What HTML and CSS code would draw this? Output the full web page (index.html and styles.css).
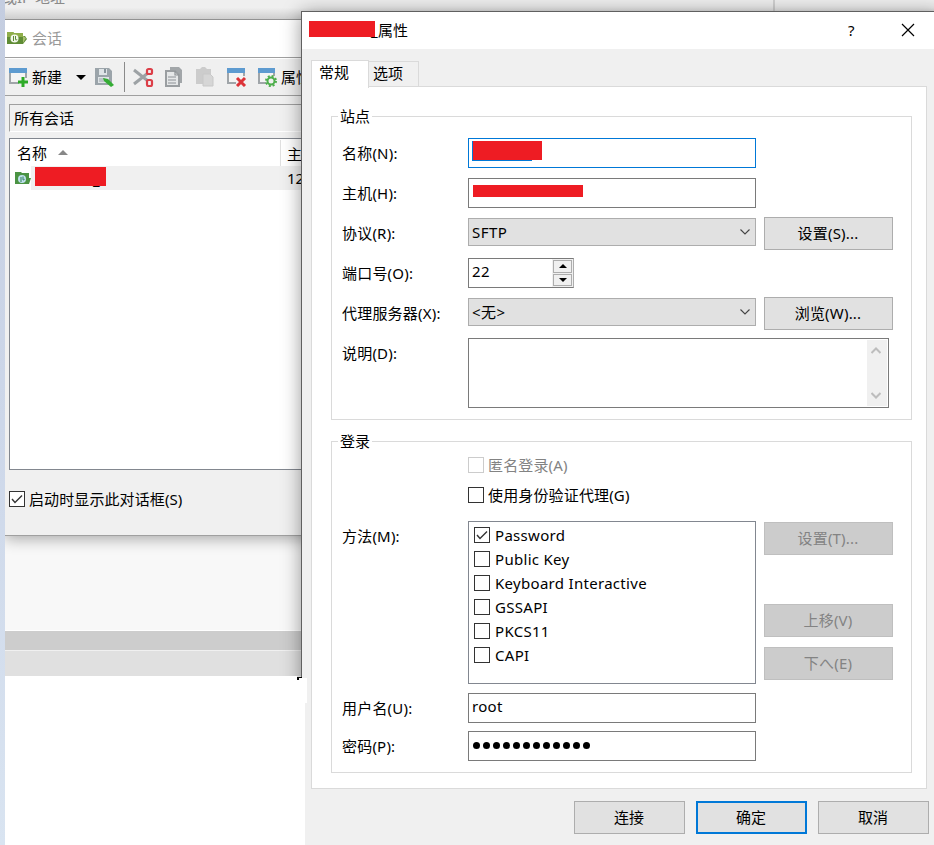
FILE: index.html
```html
<!DOCTYPE html>
<html lang="zh-CN">
<head>
<meta charset="utf-8">
<title>会话属性</title>
<link rel="stylesheet" href="styles.css">
</head>
<body>
<div class="desktop">
  <div class="strip"></div>
  <main class="backdrop">
    <div class="host-bar"><span class="host-text">或IP 地址</span><i class="host-divider"></i></div>
    <div class="host-body"></div>
    <div class="host-band"></div>
    <div class="host-status"></div>
  </main>

  <section class="window sessions">
    <header class="sessions-title">
      <svg width="20" height="14" viewBox="0 0 20 14"><path d="M0 1h6l1 1h9v3h2l2 3-4 5H0z" fill="#5f8c35"/><path d="M0 1h6l1 1h9v4H0z" fill="#8fae4a"/><path d="M16 5l3 2-3 5z" fill="#a8c070"/><circle cx="7.500" cy="7.500" r="4" fill="#f2f7ea"/><path d="M6.500 5v5M8.500 5v3.500c0 1 1.400.8 1.400-.3" stroke="#5e8b35" fill="none"/></svg>
      <span>会话</span>
    </header>
    <div class="toolbar">
      <svg class="t-new" width="20" height="20" viewBox="0 0 20 20"><path d="M1 3v13h9M17 5v6" fill="none" stroke="#a0a5a9" stroke-width="2"/><path d="M2 5h14v10H2z" fill="#f4f4f4"/><path d="M0 1h18v5H0z" fill="#5e9bd0"/><path d="M9 15h10M14 10v10" stroke="#2dab27" stroke-width="3"/></svg>
      <span class="t-text">新建</span>
      <i class="caret"></i>
      <svg class="t-save" width="20" height="20" viewBox="0 0 20 20"><path d="M0 1h14l3 3v14H0z" fill="#9ba4aa"/><path d="M4 2h8v6H4zM3 10h11v6H3z" fill="#dfe4e7"/><path d="M9 2h2v4H9z" fill="#87939b"/><path d="M4 12h6M4 14h6" stroke="#9ba4aa"/><path d="M8 11l5 1 6 6-3 2-7-6z" fill="#35ad35"/></svg>
      <i class="sep"></i>
      <svg class="t-cut" width="21" height="20" viewBox="0 0 21 20"><path d="M1 3l14 11M1 17L15 6" stroke="#9da2a5" stroke-width="3"/><rect x="14" y="2" width="5" height="5" rx="1.500" fill="none" stroke="#dc3f48" stroke-width="2.200"/><rect x="14" y="13" width="5" height="6" rx="1.500" fill="none" stroke="#dc3f48" stroke-width="2.200"/></svg>
      <svg class="t-copy" width="19" height="20" viewBox="0 0 19 20"><path d="M5 0h9l3 3v13H5z" fill="#a2a6a9"/><path d="M1 4h9l4 4v11H1z" fill="#e5e7e8" stroke="#9a9ea1" stroke-width="2"/><path d="M3 10h8M3 13h8M3 16h8M10 4v4h4" stroke="#8d9295" stroke-width="1.200" fill="none"/></svg>
      <svg class="t-paste" width="19" height="20" viewBox="0 0 19 20"><path d="M0 2h4l2-2h3l2 2h4v15H0z" fill="#ccc"/><path d="M7 7h7l3 3v9H7z" fill="#d6d6d6" stroke="#c8c8c8"/></svg>
      <svg class="t-del" width="20" height="20" viewBox="0 0 20 20"><path d="M1 3v13h8M17 5v4" fill="none" stroke="#a0a5a9" stroke-width="2"/><path d="M2 5h14v10H2z" fill="#f4f4f4"/><path d="M0 1h18v5H0z" fill="#5e9bd0"/><path d="M10 11l8 8M18 11l-8 8" stroke="#dc3338" stroke-width="3"/></svg>
      <svg class="t-prop" width="20" height="20" viewBox="0 0 20 20"><path d="M1 3v13h7M16 5v4" fill="none" stroke="#a0a5a9" stroke-width="2"/><path d="M2 5h13v10H2z" fill="#f4f4f4"/><path d="M0 1h17v5H0z" fill="#5e9bd0"/><circle cx="13" cy="14" r="5" fill="none" stroke="#4dae4b" stroke-width="2" stroke-dasharray="2 1.930"/><circle cx="13" cy="14" r="3.500" fill="#f0f0f0" stroke="#4dae4b" stroke-width="2"/></svg>
      <span class="t-text">属性</span>
    </div>
    <div class="path">所有会话</div>
    <div class="list">
      <div class="list-head"><span class="col-name">名称</span><i class="sort"></i><span class="col-host">主机</span></div>
      <div class="list-row">
        <svg width="16" height="13" viewBox="0 0 16 13"><path d="M0 0h6l1 1h7v5h2l-2 6H0z" fill="#4b9343"/><circle cx="7" cy="7" r="4" fill="#bfe0ee"/><path d="M6 5v5M8 4.500v3c0 1 1.300.6 1.300-.6" stroke="#2f7e55" fill="none"/></svg>
        <div class="row-body"><i class="mask"></i><span class="row-tail">_</span><span class="row-host">127</span></div>
      </div>
    </div>
    <div class="startup"><i class="box checked"><svg viewBox="0 0 14 14"><path d="M2 7l3 3.500L12 3.500"/></svg></i><span>启动时显示此对话框(S)</span></div>
  </section>

  <section class="window dialog">
    <header class="dialog-title">
      <i class="mask"></i><span class="title-tail">_</span><span class="title-text">属性</span>
      <span class="help">?</span>
      <svg class="close" width="14" height="14" viewBox="0 0 14 14"><path d="M1 1l12 12M13 1L1 13" stroke="#000" stroke-width="1.200"/></svg>
    </header>
    <nav class="tabs"><span class="tab active">常规</span><span class="tab">选项</span></nav>
    <div class="panel">
      <div class="group site">
        <div class="legend">站点</div>
        <div class="row"><label>名称(N):</label><div class="input focus"><i class="selection"></i><i class="mask"></i></div></div>
        <div class="row"><label>主机(H):</label><div class="input"><i class="mask"></i></div></div>
        <div class="row"><label>协议(R):</label><div class="combo"><span>SFTP</span><svg width="10" height="6" viewBox="0 0 10 6"><path d="M.5.5L5 5 9.500.5"/></svg></div><div class="button">设置(S)...</div></div>
        <div class="row"><label>端口号(O):</label><div class="input spin"><span>22</span><div class="spinner"><i class="up"></i><i class="down"></i></div></div></div>
        <div class="row"><label>代理服务器(X):</label><div class="combo"><span>&lt;无&gt;</span><svg width="10" height="6" viewBox="0 0 10 6"><path d="M.5.5L5 5 9.500.5"/></svg></div><div class="button">浏览(W)...</div></div>
        <div class="row tall"><label>说明(D):</label><div class="textarea"><div class="scroll"><svg width="10" height="7" viewBox="0 0 10 7"><path d="M.5 6L5 1.500 9.500 6"/></svg><svg width="10" height="7" viewBox="0 0 10 7"><path d="M.5 1L5 5.500 9.500 1"/></svg></div></div></div>
      </div>
      <div class="group login">
        <div class="legend">登录</div>
        <div class="check disabled"><i class="box"></i><span>匿名登录(A)</span></div>
        <div class="check"><i class="box"></i><span>使用身份验证代理(G)</span></div>
        <div class="row methods"><label>方法(M):</label>
          <div class="method-list">
            <div><i class="box checked"><svg viewBox="0 0 14 14"><path d="M2 7l3 3.500L12 3.500"/></svg></i><span>Password</span></div>
            <div><i class="box"></i><span>Public Key</span></div>
            <div><i class="box"></i><span>Keyboard Interactive</span></div>
            <div><i class="box"></i><span>GSSAPI</span></div>
            <div><i class="box"></i><span>PKCS11</span></div>
            <div><i class="box"></i><span>CAPI</span></div>
          </div>
          <div class="side"><div class="button off">设置(T)...</div><div class="button off up-btn">上移(V)</div><div class="button off">下へ(E)</div></div>
        </div>
        <div class="row user"><label>用户名(U):</label><div class="input"><span>root</span></div></div>
        <div class="row"><label>密码(P):</label><div class="input dots"><i></i><i></i><i></i><i></i><i></i><i></i><i></i><i></i><i></i><i></i><i></i><i></i></div></div>
      </div>
    </div>
    <footer class="actions"><div class="button">连接</div><div class="button primary">确定</div><div class="button">取消</div></footer>
  </section>
  <div class="blank blank-upper"></div>
  <div class="blank blank-lower"></div>
  <i class="corner"></i>
</div>
</body>
</html>
```
FILE: styles.css
```css
* { box-sizing: border-box; }
body { margin: 0; }
i { display: block; flex: none; font-style: normal; }
svg { display: block; flex: none; }
.desktop {
  position: relative; display: flex; width: 934px; height: 845px; overflow: hidden;
  background: #fff; color: #000; white-space: nowrap;
  font: 15px/20px "Noto Sans", "Noto Sans CJK SC", sans-serif;
}
.strip { position: relative; z-index: 1; width: 5px; background: linear-gradient(#c4cde0, #cdd7e9 50%, #d9e4f1); }
.backdrop { flex: 1; }
.host-bar { display: flex; height: 19px; background: linear-gradient(#efefef 40%, #cecece); overflow: hidden; }
.host-text { width: 771px; margin-top: -13px; margin-left: -3px; color: #8a8a8a; flex: none; }
.host-divider { width: 2px; background: #d0d0d0; }
.host-body { height: 612px; background: #f8f8f8; border-bottom: 1px solid #fff; }
.host-band { height: 20px; background: #cdcdcd; border-bottom: 1px solid #f0f0f0; }
.host-status { height: 25px; background: #e0e0e0; }
.window { position: absolute; }
.mask { background: #ee1c23; }

.sessions { left: 5px; top: 19px; width: 500px; height: 517px; background: #f0f0f0; border-top: 1px solid #929292; border-bottom: 1px solid #a0a0a0; box-shadow: 0 3px 14px rgba(0,0,0,.32); clip-path: inset(0 0 -20px 0); }
.sessions-title { display: flex; align-items: center; gap: 5px; height: 38px; padding: 0 0 2px 2px; background: #fff; border-bottom: 1px solid #a0a0a0; color: #999; }
.toolbar { display: flex; align-items: center; height: 38px; border-top: 1px solid #fff; border-bottom: 1px solid #a0a0a0; padding-left: 4px; }
.t-text { margin-left: 3px; }
.caret { border: 5px solid transparent; border-top-color: #000; border-bottom: 0; margin: 1px 0 0 14px; }
.t-save { margin-left: 9px; }
.sep { width: 1px; height: 30px; background: #8a8a8a; margin-left: 9px; }
.t-cut { margin-left: 8px; }
.t-copy { margin-left: 11px; }
.t-paste { margin-left: 12px; }
.t-del { margin-left: 12px; }
.t-prop { margin-left: 11px; }
.path { height: 28px; margin: 8px 0 0 4px; padding-left: 4px; line-height: 27px; border: solid #a0a0a0; border-width: 1px 0 1px 1px; border-bottom-color: #fff; }
.list { height: 332px; margin: 6px 0 0 4px; border: 1px solid #82878f; background: #fff; }
.list-head { display: flex; align-items: center; height: 27px; padding-left: 7px; }
.col-name { width: 41px; padding-top: 1px; }
.sort { border: 5px solid transparent; border-bottom-color: #888; border-top: 0; }
.col-host { margin-left: 212px; padding-left: 6px; border-left: 1px solid #e0e0e0; height: 26px; line-height: 28px; }
.list-row { display: flex; align-items: center; height: 24px; padding-left: 5px; }
.row-body { display: flex; flex: 1; height: 24px; background: #f0f0f0; line-height: 24px; }
.row-body .mask { width: 71px; height: 19px; margin: 1px 0 0 4px; }
.row-tail { width: 8px; margin: 0 5px 0 -13px; padding-top: 1px; }
.row-host { margin-left: 181px; }
.startup { display: flex; align-items: center; gap: 4px; margin: 19px 0 0 4px; letter-spacing: .1px; }
.box { width: 16px; height: 16px; border: 1px solid #333; background: #fff; }
.box svg { width: 14px; height: 14px; }
.box path { fill: none; stroke: #333; stroke-width: 1.4; }

.dialog { left: 301px; top: 11px; width: 640px; height: 850px; border: 1px solid #606060; background: #f0f0f0; box-shadow: 0 2px 18px rgba(0,0,0,.4); }
.dialog-title { display: flex; align-items: center; height: 37px; padding: 0 0 2px 7px; background: #fff; }
.dialog-title .mask { width: 66px; height: 16px; margin-top: -1px; }
.title-tail { width: 7px; margin-left: -4px; }
.title-text { width: 470px; }
.help { width: 53px; }
.tabs { display: flex; align-items: flex-end; height: 38px; padding-left: 9px; }
.tab { width: 50px; height: 26px; padding-left: 4px; line-height: 23px; border: 1px solid #dadada; border-left: 0; border-bottom: 0; }
.tab.active { width: 58px; height: 28px; margin-bottom: -1px; padding-left: 7px; line-height: 22px; border-left: 1px solid #dadada; background: #fff; position: relative; z-index: 1; }
.panel { width: 616px; height: 703px; margin-left: 9px; margin-top: -1px; padding: 29px 0 0 19px; border: 1px solid #dadada; background: #fff; }
.group { width: 581px; border: 1px solid #dadada; }
.site { height: 304px; }
.login { height: 332px; margin-top: 21px; }
.legend { width: 34px; height: 20px; margin: -10px 0 11px 6px; padding-left: 2px; background: #fff; line-height: 18px; }
.row { display: flex; align-items: flex-start; height: 40px; padding-left: 10px; }
.row label { flex: none; width: 126px; line-height: 30px; letter-spacing: .2px; }
.input { display: flex; width: 288px; height: 30px; padding-left: 3px; border: 1px solid #7a7a7a; background: #fff; line-height: 25px; letter-spacing: .3px; }
.input.focus { border-color: #0078d7; }
.selection { width: 60px; height: 20px; margin: 2px -59px 0 0; background: #0078d7; }
.input > .mask { width: 110px; height: 12px; margin: 6px 0 0 1px; }
.focus > .mask { width: 69px; height: 19px; margin: 2px 0 0; }
.combo { display: flex; align-items: center; justify-content: space-between; width: 288px; height: 28px; padding: 0 5px 0 3px; border: 1px solid #adadad; background: #e1e1e1; letter-spacing: .5px; }
.combo path { fill: none; stroke: #444; stroke-width: 1.1; }
.button { width: 129px; height: 33px; flex: none; border: 1px solid #adadad; background: #e1e1e1; text-align: center; line-height: 31px; padding-right: 1px; }
.row > .button { margin: -1px 0 0 8px; letter-spacing: .2px; }
.off { background: #ccc; border-color: #bfbfbf; color: #838383; letter-spacing: .2px; }
.spin { width: 106px; justify-content: space-between; border-right-color: #adadad; }
.spinner { display: grid; gap: 1px; width: 21px; height: 28px; padding: 1px; background: #f0f0f0; }
.spinner i { display: grid; place-items: center; border: 1px solid #adadad; }
.spinner i::after { content: ""; border: 4px solid transparent; }
.spinner .up::after { border-top: 0; border-bottom-color: #000; }
.spinner .down::after { border-bottom: 0; border-top-color: #000; }
.row.tall { height: 70px; }
.textarea { display: flex; justify-content: flex-end; width: 421px; height: 70px; padding: 1px; border: 1px solid #7a7a7a; }
.scroll { display: flex; flex-direction: column; justify-content: space-between; align-items: center; width: 20px; padding: 7px 2px 7px 0; background: #f0f0f0; }
.scroll path { fill: none; stroke: #bdbdbd; stroke-width: 2; }
.login .legend { margin-bottom: -2px; }
.check { display: flex; align-items: center; gap: 4px; height: 30px; padding-left: 136px; letter-spacing: .15px; }
.disabled { color: #838383; }
.disabled .box { border-color: #ccc; }
.methods { height: 183px; padding-top: 11px; }
.method-list { width: 288px; height: 163px; flex: none; padding: 1px 0 0 5px; border: 1px solid #828790; letter-spacing: .3px; }
.method-list > div { display: flex; align-items: center; gap: 5px; height: 24px; }
.side { margin: 1px 0 0 8px; }
.up-btn { margin: 49px 0 10px; }
.user { height: 38px; }
.dots { gap: 3px; align-items: center; padding: 0 0 1px 4px; }
.dots i { width: 7px; height: 7px; border-radius: 50%; background: #000; }
.actions { display: flex; gap: 11px; margin: 12px 0 0 272px; }
.actions .button { width: 111px; }
.actions .primary { border: 2px solid #0078d7; line-height: 29px; }
.blank { position: absolute; left: 5px; background: #fff; }
.blank-upper { top: 678px; width: 302px; height: 25px; }
.blank-lower { top: 676px; width: 292px; height: 169px; }
.blank-upper + .blank-lower { box-shadow: 8px 27px #fff; }
.corner { position: absolute; left: 297px; top: 677px; width: 5px; height: 3px; border: solid #000; border-width: 1px 0 0 2px; }
```
